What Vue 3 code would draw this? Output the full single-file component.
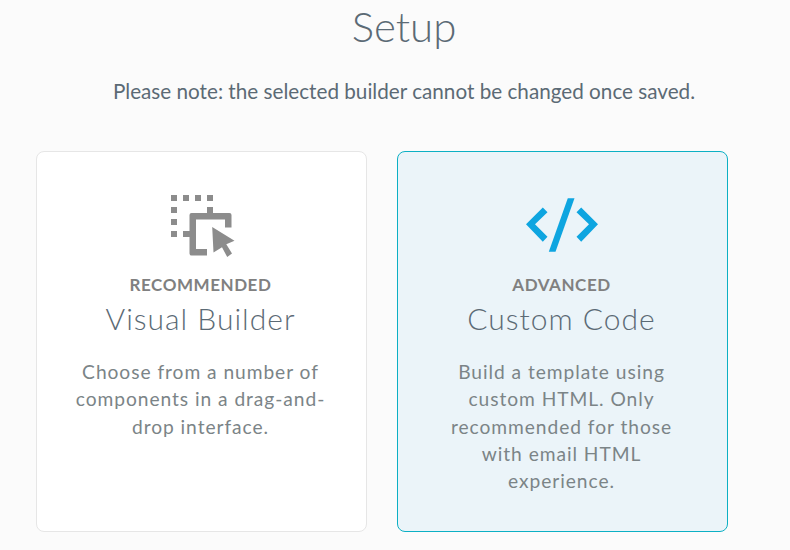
<template>
  <div class="page">
    <h1 class="title">Setup</h1>
    <p class="note">Please note: the selected builder cannot be changed once saved.</p>
    <div class="cards">
      <div class="card">
        <svg class="icon" width="70" height="70" viewBox="166.500 190 70 70">
          <g fill="#8c8c8c">
            <rect x="170.500" y="195" width="6" height="6" />
            <rect x="182.500" y="195" width="6" height="6" />
            <rect x="194.500" y="195" width="6" height="6" />
            <rect x="206.500" y="195" width="6" height="6" />
            <rect x="170.500" y="207" width="6" height="6" />
            <rect x="170.500" y="219" width="6" height="6" />
            <rect x="170.500" y="231" width="6" height="6" />
            <rect x="206.500" y="207" width="6" height="6" />
            <rect x="182.500" y="231" width="7" height="6" />
            <path d="M206.500 255.500H191a2 2 0 0 1-2-2V215a2 2 0 0 1 2-2h38a2 2 0 0 1 2 2v12.500h-6.500V219.500H195.500v29.500h11z" />
            <path d="M211.700 227L234 240.700 225.800 244.200 231.500 253.500 226.700 257 221.500 247.200 213 252.500z" />
          </g>
        </svg>
        <div class="label">RECOMMENDED</div>
        <div class="name">Visual Builder</div>
        <p class="desc">Choose from a number of components in a drag-and-drop interface.</p>
      </div>
      <div class="card selected">
        <svg class="icon" width="74" height="70" viewBox="525.500 190 74 70">
          <g fill="#0ea5e0">
            <path d="M525.500 224.300L542.300 207.500 547 212.300 534.500 224.300 547 236.700 542.300 241.700z" />
            <path d="M597.500 224.300L580.700 207.500 576 212.300 588.500 224.300 576 236.700 580.700 241.700z" />
            <path d="M567.300 198.300H574L555 251.700H548.300z" />
          </g>
        </svg>
        <div class="label">ADVANCED</div>
        <div class="name">Custom Code</div>
        <p class="desc">Build a template using custom HTML. Only recommended for those with email HTML experience.</p>
      </div>
    </div>
  </div>
</template>

<script setup>
</script>

<style>
html, body {
  background: #fbfbfb;
  overflow: hidden;
}
</style>

<style scoped>
.page {
  width: 790px;
  height: 550px;
  font-family: Lato, "Liberation Sans", sans-serif;
  overflow: hidden;
}

.title {
  margin: 0;
  padding-left: 18px;
  height: 52px;
  line-height: 52px;
  text-align: center;
  font-size: 42px;
  font-weight: 300;
  color: #5b6a75;
}

.note {
  margin: 0;
  padding: 26px 0 0 18px;
  height: 75px;
  box-sizing: border-box;
  line-height: 27px;
  text-align: center;
  font-size: 20.700px;
  color: #5b6a75;
}

.cards {
  display: flex;
  gap: 30px;
  margin-top: 24px;
  padding-left: 36px;
}

.card {
  width: 331px;
  height: 381px;
  box-sizing: border-box;
  padding: 38px 37px 0 35px;
  display: flex;
  flex-direction: column;
  align-items: center;
  text-align: center;
  background: #fff;
  border: 1px solid #e6e6e6;
  border-radius: 8px;
}

.card.selected {
  background: #ebf4f9;
  border-color: #0cb0c4;
}

.icon {
  display: block;
  flex-shrink: 0;
  margin-left: 2px;
}

.label {
  margin-top: 13px;
  line-height: 24px;
  font-size: 17px;
  font-weight: 700;
  letter-spacing: 0.550px;
  color: #808080;
}

.name {
  margin-top: 1px;
  line-height: 40px;
  font-size: 30px;
  font-weight: 300;
  letter-spacing: 1px;
  color: #5b6a75;
}

.desc {
  margin: 20px 0 0;
  line-height: 27.250px;
  font-size: 19.200px;
  letter-spacing: 0.950px;
  color: #7b8487;
}
</style>
